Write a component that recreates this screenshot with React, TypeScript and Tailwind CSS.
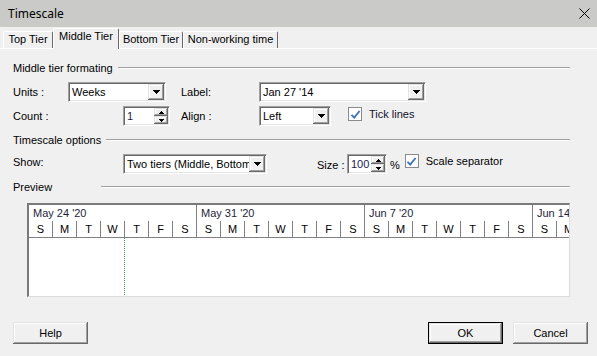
import React from 'react'

const sunken =
  'bg-white border border-t-[#a0a0a0] border-l-[#a0a0a0] border-r-white border-b-white shadow-[inset_1px_1px_0_#696969,inset_-1px_-1px_0_#e3e3e3]'
const raised =
  'bg-[#f0f0f0] shadow-[inset_-1px_-1px_0_#696969,inset_1px_1px_0_#e3e3e3,inset_-2px_-2px_0_#a0a0a0,inset_2px_2px_0_#ffffff]'

function Heading({ text, labelWidth }: { text: string; labelWidth?: string }) {
  return (
    <div className="flex items-center h-[14px]">
      <span className={labelWidth ?? ''}>{text}</span>
      <div className="ml-[5px] flex-1 h-[2px] border-t border-t-[#a0a0a0] border-b border-b-white" />
    </div>
  )
}

function Arrow() {
  return (
    <svg width="7" height="4" viewBox="0 0 7 4" shapeRendering="crispEdges">
      <path d="M0 0h7L3.5 4z" fill="#000" />
    </svg>
  )
}

function Combo({ value, width }: { value: string; width: string }) {
  return (
    <div className={`flex h-[20px] p-[1px] ${width} ${sunken}`}>
      <div className="flex-1 pl-[2px] flex items-center overflow-hidden whitespace-nowrap">{value}</div>
      <div className={`w-[16px] h-full flex items-center justify-center ${raised}`}>
        <Arrow />
      </div>
    </div>
  )
}

function SpinArrow({ up }: { up?: boolean }) {
  return (
    <svg width="5" height="3" viewBox="0 0 5 3" shapeRendering="crispEdges">
      <path d={up ? 'M2.5 0L5 3H0z' : 'M0 0h5L2.5 3z'} fill="#000" />
    </svg>
  )
}

function Spin({ value, width }: { value: string; width: string }) {
  return (
    <div className={`flex h-[20px] p-[1px] ${width} ${sunken}`}>
      <div className="flex-1 pl-[2px] flex items-center text-[#1a1a50]">{value}</div>
      <div className="w-[14px] h-full flex flex-col">
        <div className={`flex-1 flex items-center justify-center ${raised}`}>
          <SpinArrow up />
        </div>
        <div className={`flex-1 flex items-center justify-center ${raised}`}>
          <SpinArrow />
        </div>
      </div>
    </div>
  )
}

function Check() {
  return (
    <div className="w-[14px] h-[14px] border border-[#8a8a8a] bg-white flex items-center justify-center">
      <svg width="11" height="11" viewBox="0 0 11 11">
        <path d="M1.5 5.8L4.2 8.6L9.6 2" fill="none" stroke="#3f74b8" strokeWidth="1.9" />
      </svg>
    </div>
  )
}

function Tab({ text, width, selected }: { text: string; width: string; selected?: boolean }) {
  return (
    <div
      className={`${width} flex justify-center border-l border-t border-r border-l-white border-t-white border-r-[#696969] rounded-t-[2px] ${
        selected ? 'h-[21px] -mb-px relative bg-[#f0f0f0] pt-[2px]' : 'h-[17px] pt-[2px]'
      }`}
    >
      {text}
    </div>
  )
}

function Button({ text, def }: { text: string; def?: boolean }) {
  return (
    <div
      className={`w-[75px] h-[22px] flex items-center justify-center ${raised} ${
        def ? 'border border-black' : ''
      }`}
    >
      {text}
    </div>
  )
}

const days = ['S', 'M', 'T', 'W', 'T', 'F', 'S']
const months = ["May 24 '20", "May 31 '20", "Jun 7 '20", "Jun 14 '20"]

function Month({ label }: { label: string }) {
  return (
    <div className="w-[168px] shrink-0 border-r border-[#808080]">
      <div className="h-[16px] pl-[4px] flex items-center text-[#1e1e3c] whitespace-nowrap">{label}</div>
      <div className="h-[16px] flex">
        {days.map((d, i) => (
          <div
            key={i}
            className={`w-[24px] shrink-0 flex items-center justify-center ${
              i < 6 ? 'border-r border-[#808080]' : ''
            }`}
          >
            {d}
          </div>
        ))}
      </div>
    </div>
  )
}

export default function App() {
  return (
    <div className="w-[597px] h-[356px] bg-[#f0f0f0] flex flex-col text-[11px] leading-none text-black font-['Liberation_Sans',Arial,sans-serif] overflow-hidden">
      <div className="h-[27px] bg-[#cacbc8] flex items-center justify-between pl-[8px] pr-[7px]">
        <span className="text-[12px] font-['Noto_Sans',sans-serif]">Timescale</span>
        <svg width="11" height="11" viewBox="0 0 11 11">
          <path d="M0.5 0.5L10.5 10.5M10.5 0.5L0.5 10.5" stroke="#000" strokeWidth="1" />
        </svg>
      </div>

      <div className="h-[22px] flex items-end pl-[3px] border-b border-white">
        <Tab text="Top Tier" width="w-[50px]" />
        <Tab text="Middle Tier" width="w-[66px]" selected />
        <Tab text="Bottom Tier" width="w-[64px]" />
        <Tab text="Non-working time" width="w-[95px]" />
      </div>

      <div className="pl-[13px] pr-[27px] pt-[12px] flex flex-col">
        <Heading text="Middle tier formating" />

        <div className="mt-[7px] flex items-center h-[20px]">
          <span className="w-[55px]">Units :</span>
          <Combo value="Weeks" width="w-[98px]" />
          <span className="ml-[15px] w-[78px]">Label:</span>
          <Combo value="Jan 27 '14" width="w-[167px]" />
        </div>

        <div className="mt-[4px] flex items-center h-[20px]">
          <span className="w-[110px]">Count :</span>
          <Spin value="1" width="w-[47px]" />
          <span className="ml-[11px] w-[78px]">Align :</span>
          <Combo value="Left" width="w-[72px]" />
          <div className="ml-[17px] self-start mt-[1px]">
            <Check />
          </div>
          <span className="ml-[7px] self-start mt-[3px] text-[#101030]">Tick lines</span>
        </div>

        <div className="mt-[7px]">
          <Heading text="Timescale options" />
        </div>

        <div className="mt-[7px] flex items-center h-[20px]">
          <span className="w-[110px] self-start mt-[3px]">Show:</span>
          <Combo value="Two tiers (Middle, Bottom)" width="w-[144px]" />
          <span className="ml-[50px] w-[30px] mt-[3px]">Size :</span>
          <Spin value="100" width="w-[40px]" />
          <span className="ml-[3px] mt-[3px]">%</span>
          <div className="ml-[5px] self-start">
            <Check />
          </div>
          <span className="ml-[7px] self-start mt-[2px]">Scale separator</span>
        </div>

        <div className="mt-[6px]">
          <Heading text="Preview" labelWidth="w-[83px]" />
        </div>

        <div className="mt-[9px] ml-[14px] w-[543px] h-[94px] bg-white border-t-2 border-l-2 border-t-[#7a7a7a] border-l-[#7a7a7a] border-r border-b border-r-[#dcdcdc] border-b-[#dcdcdc] flex flex-col overflow-hidden">
          <div className="flex border-b border-[#808080] shrink-0">
            {months.map(m => (
              <Month key={m} label={m} />
            ))}
          </div>
          <div className="flex-1 flex">
            <div className="ml-[95px] w-px h-full bg-[repeating-linear-gradient(to_bottom,#3ca046_0px,#3ca046_1px,#ffffff_1px,#ffffff_2px)]" />
          </div>
        </div>
      </div>

      <div className="mt-[25px] pl-[13px] pr-[9px] flex items-center">
        <Button text="Help" />
        <div className="flex-1" />
        <Button text="OK" def />
        <div className="w-[10px]" />
        <Button text="Cancel" />
      </div>
    </div>
  )
}
